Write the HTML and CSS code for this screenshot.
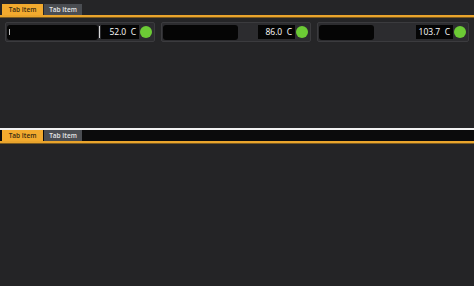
FILE: index.html
```html
<!DOCTYPE html>
<html>
<head>
<meta charset="utf-8">
<link rel="stylesheet" href="styles.css">
</head>
<body>
  <section class="pane pane-top">
    <div class="tabstrip">
      <div class="tab tab-active">Tab Item</div>
      <div class="tab">Tab Item</div>
    </div>
    <div class="rule"></div>
    <div class="cards">
      <div class="card">
        <div class="name name-1"><span class="caret-left"></span></div>
        <span class="caret"></span>
        <div class="value value-1">52.0&nbsp;&nbsp;C</div>
        <span class="dot"></span>
      </div>
      <div class="card">
        <div class="name name-2"></div>
        <div class="value value-2">86.0&nbsp;&nbsp;C</div>
        <span class="dot"></span>
      </div>
      <div class="card">
        <div class="name name-3"></div>
        <div class="value value-3">103.7&nbsp;&nbsp;C</div>
        <span class="dot"></span>
      </div>
    </div>
  </section>
  <div class="divider"></div>
  <section class="pane pane-bottom">
    <div class="tabstrip tabstrip-dark">
      <div class="tab tab-active">Tab Item</div>
      <div class="tab">Tab Item</div>
    </div>
    <div class="rule"></div>
  </section>
</body>
</html>
```

FILE: styles.css
```css
html, body {
  margin: 0;
  padding: 0;
  width: 474px;
  height: 286px;
  overflow: hidden;
  background: #242426;
  font-family: "Open Sans", "DejaVu Sans", sans-serif;
}

.pane-top {
  height: 128px;
  padding-top: 4px;
  box-sizing: border-box;
  background: #252527;
}

.tabstrip {
  display: flex;
  height: 11px;
  padding-left: 2px;
}

.tabstrip-dark {
  background: #0b0b0c;
}

.tab {
  width: 38px;
  margin-right: 1px;
  background: #4a4d52;
  color: #e6e6e6;
  font-size: 6.5px;
  font-weight: 600;
  line-height: 11px;
  text-align: center;
  white-space: nowrap;
}

.tab-active {
  width: 41px;
  background: #f2aa2e;
  color: #3a2a10;
}

.rule {
  height: 2px;
  background: #e9a42c;
  border-bottom: 1px solid #7a5a20;
}

.cards {
  display: grid;
  grid-template-columns: 150px 150px 152px;
  gap: 6px;
  padding: 4px 5px 0 5px;
}

.card {
  display: flex;
  align-items: center;
  height: 20px;
  box-sizing: border-box;
  border: 1px solid #3b3b3e;
  border-radius: 2px;
  background: #2c2c2f;
  padding: 0 2px 0 1px;
}

.name {
  position: relative;
  height: 15px;
  background: #050505;
  border-radius: 3px;
}

.name-1 { width: 92px; }
.name-2 { width: 75px; }
.name-3 { width: 55px; }

.caret-left {
  position: absolute;
  left: 2px;
  top: 4px;
  width: 1px;
  height: 6px;
  background: #bdbdbd;
}

.caret {
  width: 1px;
  height: 12px;
  background: #d8d8d8;
  margin-left: 1px;
  margin-right: 1px;
}

.value {
  margin-left: auto;
  height: 14px;
  background: #050505;
  color: #ffffff;
  font-size: 8.5px;
  line-height: 14px;
  text-align: right;
  padding-right: 3px;
  box-sizing: border-box;
  white-space: nowrap;
}

.value-1 { width: 38px; }
.value-2 { width: 37px; }
.value-3 { width: 37px; }

.dot {
  width: 12px;
  height: 12px;
  border-radius: 50%;
  background: #6ccb35;
  margin-left: 1px;
  flex: none;
}

.divider {
  height: 2px;
  background: #f2f2f2;
}

.pane-bottom {
  height: 156px;
  background: #242426;
}
```
